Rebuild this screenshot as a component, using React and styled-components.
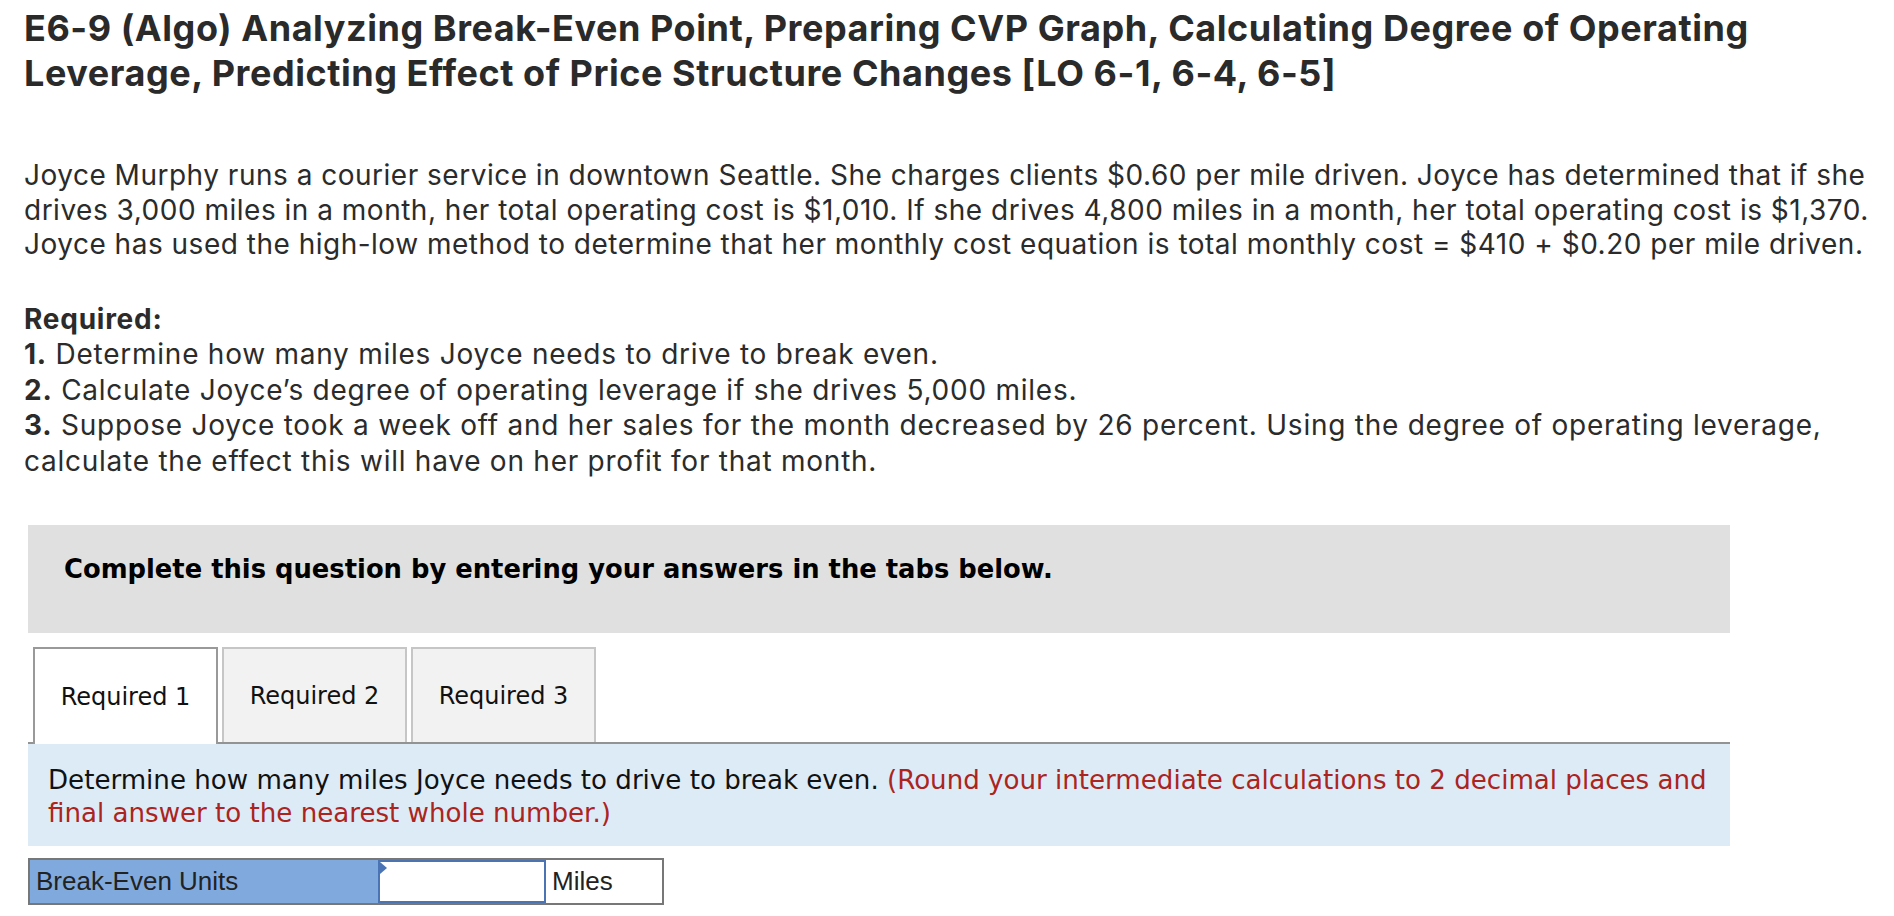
import React from 'react'
import styled, { createGlobalStyle } from 'styled-components'

const GlobalStyle = createGlobalStyle`
  html, body {
    margin: 0;
    padding: 0;
    background: #fff;
  }
  body {
    font-family: 'Inter', 'Liberation Sans', sans-serif;
    color: #2b2b2b;
  }
`

const Page = styled.div`
  padding: 6px 24px 0 24px;
`

const Title = styled.h1`
  margin: 0;
  font-family: 'Inter', sans-serif;
  font-weight: 700;
  font-size: 36px;
  letter-spacing: 0.55px;
  line-height: 45px;
  color: #2a2a2a;
`

const Para = styled.p`
  margin: 62px 0 0;
  font-size: 28px;
  letter-spacing: 0.5px;
  line-height: 34.5px;
  white-space: nowrap;
`

const Required = styled.div`
  margin-top: 40px;
  font-size: 28px;
  letter-spacing: 0.75px;
  line-height: 35.6px;
  white-space: nowrap;
`

const Strong = styled.b`
  font-weight: 700;
`

const Work = styled.div`
  margin: 46px 0 0 4px;
  width: 1702px;
  font-family: 'DejaVu Sans', Verdana, sans-serif;
`

const Banner = styled.div`
  height: 108px;
  background: #e0e0e0;
  display: flex;
  align-items: center;
  padding: 0 0 20px 36px;
  box-sizing: border-box;
  font-weight: 700;
  font-size: 25.8px;
  color: #000;
`

const TabBar = styled.div`
  margin-top: 14px;
  display: flex;
  align-items: flex-end;
  gap: 4px;
  padding-left: 5px;
  border-bottom: 2px solid #939393;
  height: 97px;
  box-sizing: border-box;
`

const Tab = styled.div`
  width: 185px;
  height: ${(p) => (p.active ? '97px' : '95px')};
  box-sizing: border-box;
  display: flex;
  align-items: center;
  justify-content: center;
  font-size: 24px;
  color: #111;
  background: ${(p) => (p.active ? '#fff' : '#f2f2f2')};
  border: 2px solid ${(p) => (p.active ? '#999' : '#c6c6c6')};
  border-bottom: 0;
  margin-bottom: ${(p) => (p.active ? '-2px' : '0')};
`

const Prompt = styled.div`
  background: #ddebf7;
  padding: 20px 20px 14px;
  height: 102px;
  box-sizing: border-box;
  font-size: 26.1px;
  line-height: 33px;
  color: #111;
  white-space: nowrap;
`

const Note = styled.span`
  color: #ab2420;
`

const AnswerRow = styled.div`
  margin-top: 12px;
  display: flex;
  width: 636px;
  height: 47px;
  border: 2px solid #777;
  box-sizing: border-box;
  font-family: 'Liberation Sans', Arial, sans-serif;
  font-size: 26px;
  color: #222;
`

const Label = styled.div`
  width: 348px;
  background: #80aadd;
  display: flex;
  align-items: center;
  padding-left: 6px;
  box-sizing: border-box;
`

const Entry = styled.div`
  width: 168px;
  background: #fff;
  border: 2px solid #4a74b4;
  box-sizing: border-box;
  position: relative;

  &::before {
    content: '';
    position: absolute;
    left: 0;
    top: 0;
    border-left: 7px solid #4a74b4;
    border-top: 6px solid transparent;
    border-bottom: 6px solid transparent;
  }
`

const Unit = styled.div`
  flex: 1;
  display: flex;
  align-items: center;
  padding-left: 6px;
  background: #fff;
`

const App = () => (
  <>
    <GlobalStyle />
    <Page>
      <Title>
        E6-9 (Algo) Analyzing Break-Even Point, Preparing CVP Graph, Calculating Degree of Operating
        <br />
        Leverage, Predicting Effect of Price Structure Changes [LO 6-1, 6-4, 6-5]
      </Title>
      <Para>
        Joyce Murphy runs a courier service in downtown Seattle. She charges clients $0.60 per mile driven. Joyce has determined that if she
        <br />
        drives 3,000 miles in a month, her total operating cost is $1,010. If she drives 4,800 miles in a month, her total operating cost is $1,370.
        <br />
        Joyce has used the high-low method to determine that her monthly cost equation is total monthly cost = $410 + $0.20 per mile driven.
      </Para>
      <Required>
        <Strong>Required:</Strong>
        <br />
        <Strong>1.</Strong> Determine how many miles Joyce needs to drive to break even.
        <br />
        <Strong>2.</Strong> Calculate Joyce’s degree of operating leverage if she drives 5,000 miles.
        <br />
        <Strong>3.</Strong> Suppose Joyce took a week off and her sales for the month decreased by 26 percent. Using the degree of operating leverage,
        <br />
        calculate the effect this will have on her profit for that month.
      </Required>
      <Work>
        <Banner>Complete this question by entering your answers in the tabs below.</Banner>
        <TabBar>
          <Tab active>Required 1</Tab>
          <Tab>Required 2</Tab>
          <Tab>Required 3</Tab>
        </TabBar>
        <Prompt>
          Determine how many miles Joyce needs to drive to break even.{' '}
          <Note>
            (Round your intermediate calculations to 2 decimal places and
            <br />
            final answer to the nearest whole number.)
          </Note>
        </Prompt>
        <AnswerRow>
          <Label>Break-Even Units</Label>
          <Entry />
          <Unit>Miles</Unit>
        </AnswerRow>
      </Work>
    </Page>
  </>
)

export default App
